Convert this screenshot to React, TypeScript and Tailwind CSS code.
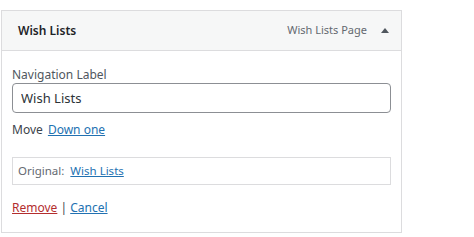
export default function App() {
  return (
    <div className="w-[474px] h-[237px] bg-white pt-[10px] pl-[1px]" style={{ fontFamily: '"Noto Sans", "Open Sans", sans-serif' }}>
      <div className="w-[401px] h-[223px] border border-[#dcdcde] bg-white flex flex-col">
        <div className="h-[40px] shrink-0 bg-[#f6f7f7] border-b border-[#dcdcde] flex items-center pl-[16px] pr-[12px]">
          <span className="text-[12px] font-semibold text-[#1d2327]">Wish Lists</span>
          <span className="ml-auto text-[11px] text-[#646970]">Wish Lists Page</span>
          <span className="ml-[14px] w-0 h-0 border-l-[4px] border-r-[4px] border-b-[5px] border-l-transparent border-r-transparent border-b-[#50575e]" />
        </div>
        <div className="px-[10px] pt-[16px]">
          <label className="block text-[12px] leading-[16px] text-[#50575e]">Navigation Label</label>
          <input
            type="text"
            defaultValue="Wish Lists"
            className="block w-full h-[30px] px-[8px] text-[13px] text-[#2c3338] border border-[#8c8f94] rounded-[4px] bg-white outline-none"
          />
          <div className="mt-[8px] text-[12px] leading-[18px] text-[#3c434a]">
            Move <a href="#" className="ml-[2px] text-[#2271b1] underline">Down one</a>
          </div>
          <div className="mt-[18px] h-[28px] border border-[#dcdcde] flex items-center px-[5px] text-[11.5px] text-[#646970]">
            Original:
            <a href="#" className="ml-[6px] text-[#2271b1] underline">Wish Lists</a>
          </div>
          <div className="mt-[14px] text-[12px] leading-[18px] text-[#3c434a]">
            <a href="#" className="text-[#b32d2e] underline">Remove</a> | <a href="#" className="text-[#2271b1] underline">Cancel</a>
          </div>
        </div>
      </div>
    </div>
  );
}
